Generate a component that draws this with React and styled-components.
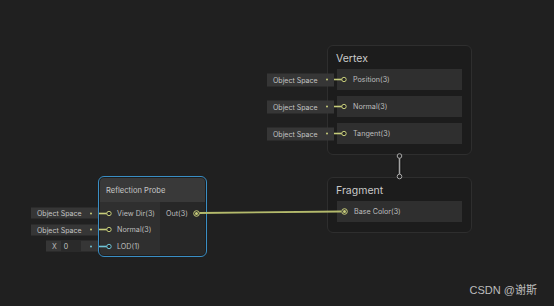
import styled, { createGlobalStyle } from 'styled-components';

const GlobalStyle = createGlobalStyle`
    html, body {
        margin: 0;
        padding: 0;
        background: #202020;
    }
    * {
        box-sizing: border-box;
    }
`;

const VEC3 = '#c6cc7a';
const VEC1 = '#6ec3d6';

const Canvas = styled.div`
    position: relative;
    width: 554px;
    height: 306px;
    overflow: hidden;
    background: #202020;
    font-family: Inter, "Noto Sans", sans-serif;
`;

const Wires = styled.svg`
    position: absolute;
    left: 0;
    top: 0;
    pointer-events: none;
`;

// master stack blocks (Vertex / Fragment)
const Block = styled.div`
    position: absolute;
    left: ${({ $x }) => $x}px;
    top: ${({ $y }) => $y}px;
    width: 145px;
    display: flex;
    flex-direction: column;
    padding: 6px 9px 10px 9px;
    background: #1c1c1c;
    border: 1px solid #2e2e2e;
    border-radius: 6px;
`;

const BlockTitle = styled.div`
    font-size: 10.5px;
    line-height: 14px;
    color: #cacaca;
    margin: 0 0 3px -1px;
`;

const SlotList = styled.div`
    display: flex;
    flex-direction: column;
    gap: 6px;
`;

const Slot = styled.div`
    position: relative;
    height: 21px;
    display: flex;
    align-items: center;
    padding-left: 5px;
    background: #2f2f2f;
`;

const Label = styled.span`
    font-size: 7.2px;
    color: #bdbdbd;
    white-space: nowrap;
`;

const PortSvg = styled.svg`
    flex: 0 0 auto;
    margin: 0 ${({ $after }) => $after}px 0 -8px;
`;

// inline value field hanging off the left side of a port
const Chip = styled.div`
    position: absolute;
    right: calc(100% + ${({ $gap }) => $gap}px);
    top: 50%;
    transform: translateY(-50%);
    width: ${({ $w }) => $w}px;
    height: ${({ $h }) => $h}px;
    display: flex;
    align-items: center;
    padding: 0 6px;
    background: #363636;
    font-size: 7px;
    color: #c4c4c4;
    white-space: nowrap;
`;

const ChipText = styled.span`
    flex: 1 1 auto;
`;

const ChipDot = styled.span`
    width: 2px;
    height: 2px;
    border-radius: 50%;
    background: ${({ $color }) => $color};
`;

const AxisLabel = styled.span`
    color: #b8b8b8;
    margin: 0 4px 0 3px;
`;

const NumberField = styled.span`
    width: 20px;
    height: 100%;
    display: flex;
    align-items: center;
    padding-left: 3px;
    background: #2a2a2a;
    margin-right: auto;
`;

// reflection probe node
const Node = styled.div`
    position: absolute;
    left: ${({ $x }) => $x}px;
    top: ${({ $y }) => $y}px;
    width: 109px;
    height: 81px;
    display: flex;
    flex-direction: column;
    padding: 1px;
    background: #1d1d1d;
    border: 1px solid #3a8ec4;
    border-radius: 6px;
`;

const NodeHeader = styled.div`
    height: 24px;
    display: flex;
    align-items: center;
    padding-left: 6px;
    background: #393939;
    border-radius: 4px 4px 0 0;
    font-size: 7.6px;
    color: #c6c6c6;
`;

const NodeBody = styled.div`
    flex: 1 1 auto;
    display: flex;
`;

const Inputs = styled.div`
    width: 60px;
    padding-top: 3px;
    background: #2f2f2f;
    border-radius: 0 0 0 4px;
`;

const Outputs = styled.div`
    flex: 1 1 auto;
    padding-top: 3px;
    background: #272727;
    border-radius: 0 0 4px 0;
`;

const PortRow = styled.div`
    position: relative;
    height: 16.5px;
    display: flex;
    align-items: center;
    padding-left: ${({ $out }) => $out ? 6 : 7}px;
    padding-right: 5px;
    justify-content: ${({ $out }) => $out ? 'space-between' : 'flex-start'};
`;

const Watermark = styled.div`
    position: absolute;
    right: 17px;
    bottom: 9px;
    font-family: "Liberation Sans", "Noto Sans CJK SC", sans-serif;
    font-size: 11px;
    color: #bdbdbd;
`;

const InPort = ({ color = VEC3, after = 5 }) => (
    <PortSvg width="13" height="7" viewBox="0 0 13 7" $after={after}>
        <line x1="0" y1="3.5" x2="8" y2="3.5" stroke={color} strokeWidth="1.6" />
        <circle cx="10" cy="3.5" r="2.2" fill="#262626" stroke={color} strokeWidth="1" />
    </PortSvg>
);

const LinkedPort = ({ style }) => (
    <svg width="7" height="7" viewBox="0 0 7 7" style={style}>
        <circle cx="3.5" cy="3.5" r="2.8" fill="none" stroke={VEC3} strokeWidth="1" />
        <circle cx="3.5" cy="3.5" r="1.5" fill={VEC3} />
    </svg>
);

const SpaceChip = ({ w = 67, h = 13, gap = 3 }) => (
    <Chip $w={w} $h={h} $gap={gap}>
        <ChipText>Object Space</ChipText>
        <ChipDot $color={VEC3} />
    </Chip>
);

const vertexSlots = ['Position(3)', 'Normal(3)', 'Tangent(3)'];

const App = () => (
    <Canvas>
        <GlobalStyle />

        <Block $x={327} $y={45}>
            <BlockTitle>Vertex</BlockTitle>
            <SlotList>
                {vertexSlots.map(name => (
                    <Slot key={name}>
                        <SpaceChip />
                        <InPort after={6} />
                        <Label>{name}</Label>
                    </Slot>
                ))}
            </SlotList>
        </Block>

        <Block $x={327} $y={177}>
            <BlockTitle>Fragment</BlockTitle>
            <SlotList>
                <Slot>
                    <LinkedPort style={{ margin: '0 6px 0 -1px' }} />
                    <Label>Base Color(3)</Label>
                </Slot>
            </SlotList>
        </Block>

        <Node $x={98} $y={176}>
            <NodeHeader>Reflection Probe</NodeHeader>
            <NodeBody>
                <Inputs>
                    <PortRow>
                        <SpaceChip h={11} gap={2} />
                        <InPort />
                        <Label>View Dir(3)</Label>
                    </PortRow>
                    <PortRow>
                        <SpaceChip h={11} gap={2} />
                        <InPort />
                        <Label>Normal(3)</Label>
                    </PortRow>
                    <PortRow>
                        <Chip $w={52} $h={11} $gap={2} style={{ paddingLeft: 3 }}>
                            <AxisLabel>X</AxisLabel>
                            <NumberField>0</NumberField>
                            <ChipDot $color={VEC1} />
                        </Chip>
                        <InPort color={VEC1} />
                        <Label>LOD(1)</Label>
                    </PortRow>
                </Inputs>
                <Outputs>
                    <PortRow $out>
                        <Label>Out(3)</Label>
                        <LinkedPort />
                    </PortRow>
                </Outputs>
            </NodeBody>
        </Node>

        <Wires width="554" height="306" viewBox="0 0 554 306">
            <line x1="199.5" y1="213" x2="341" y2="211.5" stroke="#b4ba6c" strokeWidth="1.9" />
            <line x1="399.5" y1="158" x2="399.5" y2="174" stroke="#151515" strokeWidth="4" />
            <line x1="399.5" y1="158" x2="399.5" y2="174" stroke="#a4a4a4" strokeWidth="1.6" />
            <circle cx="399.5" cy="156" r="2.3" fill="#202020" stroke="#a8a8a8" strokeWidth="1" />
            <circle cx="399.5" cy="176.5" r="2.3" fill="#202020" stroke="#a8a8a8" strokeWidth="1" />
        </Wires>

        <Watermark>CSDN @谢斯</Watermark>
    </Canvas>
);

export default App;
